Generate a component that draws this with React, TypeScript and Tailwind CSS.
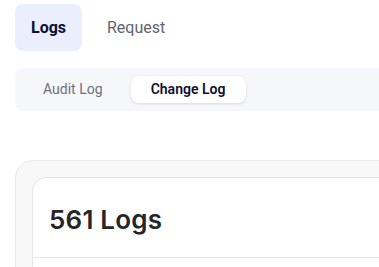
export default function App() {
  return (
    <div className="min-h-screen bg-white font-['Roboto',sans-serif] overflow-hidden">
      <div className="flex items-center gap-[8px] pl-[15px] pt-[4px]">
        <button className="h-[47px] w-[67px] rounded-[8px] bg-[#ebeefd] text-[16px] font-bold text-[#0c1033]">
          Logs
        </button>
        <button className="h-[47px] px-[17px] text-[16px] text-[#5f6470]">Request</button>
      </div>

      <div className="ml-[15px] mt-[17px] flex h-[43px] w-[400px] items-center gap-[14px] rounded-[8px] bg-[#f6f7fb] pl-[14px]">
        <button className="h-[27px] px-[14px] text-[14px] text-[#6b7180]">Audit Log</button>
        <button className="h-[27px] w-[115px] rounded-[8px] bg-white text-[14px] font-semibold text-[#0c1033] shadow-[0_1px_3px_rgba(0,0,0,0.12)]">
          Change Log
        </button>
      </div>

      <div className="ml-[15px] mt-[49px] w-[420px] rounded-tl-[18px] border border-[#ebebeb] bg-[#f8f8f8] pl-[16px] pt-[16px]">
        <div className="rounded-tl-[14px] border border-[#e6e6e6] bg-white">
          <div className="h-[80px] border-b border-[#e6e6e6] pl-[16px] pt-[22px] font-['Inter',sans-serif] text-[26px] font-semibold tracking-[0.2px] text-[#26262a]">
            561 Logs
          </div>
          <div className="h-[40px]" />
        </div>
      </div>
    </div>
  );
}
